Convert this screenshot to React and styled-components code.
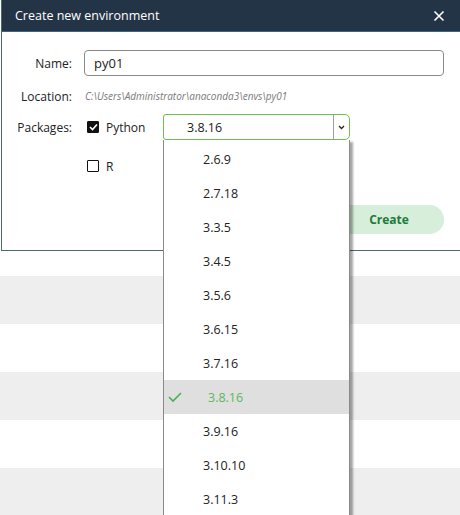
import React from "react";
import styled, { createGlobalStyle } from "styled-components";

const GlobalStyle = createGlobalStyle`
  html, body {
    margin: 0;
    padding: 0;
    background: #ffffff;
    overflow: hidden;
  }
  body {
    font-family: "Open Sans", "DejaVu Sans", sans-serif;
    color: #222;
  }
`;

const Page = styled.div`
  width: 460px;
  height: 515px;
  position: relative;
  overflow: hidden;
`;

const Dialog = styled.div`
  margin-left: 1px;
  width: 459px;
  border-left: 1px solid #4f6673;
  border-bottom: 1px solid #4f6673;
  box-sizing: border-box;
  position: relative;
  z-index: 2;
  background: #fff;
`;

const Header = styled.div`
  height: 32px;
  background: #243447;
  border-bottom: 1px solid #3d6580;
  box-sizing: border-box;
  display: flex;
  align-items: center;
  justify-content: space-between;
  padding: 0 14px 0 13px;
  color: #fff;
  font-size: 12.5px;
`;

const Close = styled.svg`
  width: 12px;
  height: 12px;
  margin-right: 1px;
`;

const Body = styled.div`
  height: 218px;
  box-sizing: border-box;
  padding: 17px 16px 0 0;
  display: flex;
  flex-direction: column;
`;

const Row = styled.div`
  display: flex;
  align-items: center;
  height: ${(p) => p.$h}px;
  margin-top: ${(p) => p.$mt || 0}px;
`;

const Label = styled.div`
  width: 70px;
  text-align: right;
  font-size: 12px;
  margin-right: 12px;
  flex-shrink: 0;
`;

const Input = styled.div`
  flex: 1;
  height: 26px;
  box-sizing: border-box;
  border: 1px solid #8a8a8a;
  border-radius: 4px;
  display: flex;
  align-items: center;
  padding-left: 9px;
  font-size: 13px;
`;

const Path = styled.div`
  font-size: 10px;
  font-style: italic;
  color: #7a7a7a;
  padding-left: 1px;
`;

const Pkg = styled.div`
  width: 79px;
  display: flex;
  align-items: center;
  gap: 7px;
  padding-left: 3px;
  box-sizing: border-box;
  font-size: 12px;
`;

const Check = styled.span`
  width: 12px;
  height: 12px;
  box-sizing: border-box;
  border: 1.5px solid #111;
  border-radius: 1px;
  background: ${(p) => (p.$on ? "#111" : "#fff")};
  display: inline-flex;
  align-items: center;
  justify-content: center;
`;

const SelectWrap = styled.div`
  position: relative;
  width: 187px;
`;

const SelectBox = styled.div`
  height: 26px;
  box-sizing: border-box;
  border: 1px solid #6cc04a;
  border-radius: 3px 5px 5px 3px;
  display: flex;
  align-items: center;
  font-size: 12.5px;
`;

const SelectValue = styled.div`
  flex: 1;
  padding-left: 23px;
`;

const Arrow = styled.div`
  width: 15px;
  height: 100%;
  border-left: 1px solid #a0a0a0;
  display: flex;
  align-items: center;
  justify-content: center;
`;

const Popup = styled.ul`
  position: absolute;
  top: 26px;
  left: 0;
  width: 187px;
  margin: 0;
  padding: 2px 0 0;
  list-style: none;
  background: #fff;
  border: 1px solid #8a8a8a;
  border-top: none;
  box-sizing: border-box;
  box-shadow: 3px 2px 2px rgba(0, 0, 0, 0.35);
  z-index: 5;
`;

const Item = styled.li`
  height: 34px;
  display: flex;
  align-items: center;
  position: relative;
  padding-left: ${(p) => (p.$sel ? 44 : 39)}px;
  background: ${(p) => (p.$sel ? "#dfdfdf" : "#fff")};
  color: ${(p) => (p.$sel ? "#5cb85c" : "#222")};
  font-size: 12.5px;
`;

const Tick = styled.svg`
  position: absolute;
  left: 4px;
  top: 11px;
  width: 14px;
  height: 12px;
`;

const ButtonRow = styled.div`
  display: flex;
  justify-content: flex-end;
  margin-top: 29px;
`;

const CreateBtn = styled.button`
  width: 110px;
  height: 29px;
  border: none;
  border-radius: 15px;
  background: #d7eeda;
  color: #1e7a3b;
  font-family: "Open Sans", "DejaVu Sans", sans-serif;
  font-weight: 700;
  font-size: 12px;
  padding: 0;
`;

const Stripes = styled.div`
  display: flex;
  flex-direction: column;
`;

const Stripe = styled.div`
  height: ${(p) => p.$h}px;
  background: ${(p) => (p.$alt ? "#eeeeee" : "#ffffff")};
`;

const versions = [
  "2.6.9",
  "2.7.18",
  "3.3.5",
  "3.4.5",
  "3.5.6",
  "3.6.15",
  "3.7.16",
  "3.8.16",
  "3.9.16",
  "3.10.10",
  "3.11.3",
];

export default function App() {
  const selected = "3.8.16";
  return (
    <Page>
      <GlobalStyle />
      <Dialog>
        <Header>
          <span>Create new environment</span>
          <Close viewBox="0 0 12 12">
            <path d="M1.5 1.5 L10.5 10.5 M10.5 1.5 L1.5 10.5" stroke="#fff" strokeWidth="1.6" />
          </Close>
        </Header>
        <Body>
          <Row $h={26} $mt={1}>
            <Label>Name:</Label>
            <Input>py01</Input>
          </Row>
          <Row $h={22} $mt={9}>
            <Label>Location:</Label>
            <Path>C:\Users\Administrator\anaconda3\envs\py01</Path>
          </Row>
          <Row $h={26} $mt={7}>
            <Label>Packages:</Label>
            <Pkg>
              <Check $on>
                <svg width="9" height="8" viewBox="0 0 9 8">
                  <path d="M1 4 L3.5 6.5 L8 1.5" stroke="#fff" strokeWidth="1.6" fill="none" />
                </svg>
              </Check>
              Python
            </Pkg>
            <SelectWrap>
              <SelectBox>
                <SelectValue>{selected}</SelectValue>
                <Arrow>
                  <svg width="7" height="5" viewBox="0 0 7 5">
                    <path d="M1 1 L3.5 3.5 L6 1" stroke="#222" strokeWidth="1.3" fill="none" />
                  </svg>
                </Arrow>
              </SelectBox>
              <Popup>
                {versions.map((v) => (
                  <Item key={v} $sel={v === selected}>
                    {v === selected && (
                      <Tick viewBox="0 0 14 12">
                        <path d="M1 6 L5 10 L13 2" stroke="#4caf50" strokeWidth="1.6" fill="none" />
                      </Tick>
                    )}
                    {v}
                  </Item>
                ))}
              </Popup>
            </SelectWrap>
          </Row>
          <Row $h={20} $mt={16}>
            <Label />
            <Pkg>
              <Check />R
            </Pkg>
          </Row>
          <ButtonRow>
            <CreateBtn>Create</CreateBtn>
          </ButtonRow>
        </Body>
      </Dialog>
      <Stripes>
        <Stripe $h={25} />
        {[0, 1, 2, 3, 4, 5].map((i) => (
          <Stripe key={i} $h={48} $alt={i % 2 === 0} />
        ))}
      </Stripes>
    </Page>
  );
}
